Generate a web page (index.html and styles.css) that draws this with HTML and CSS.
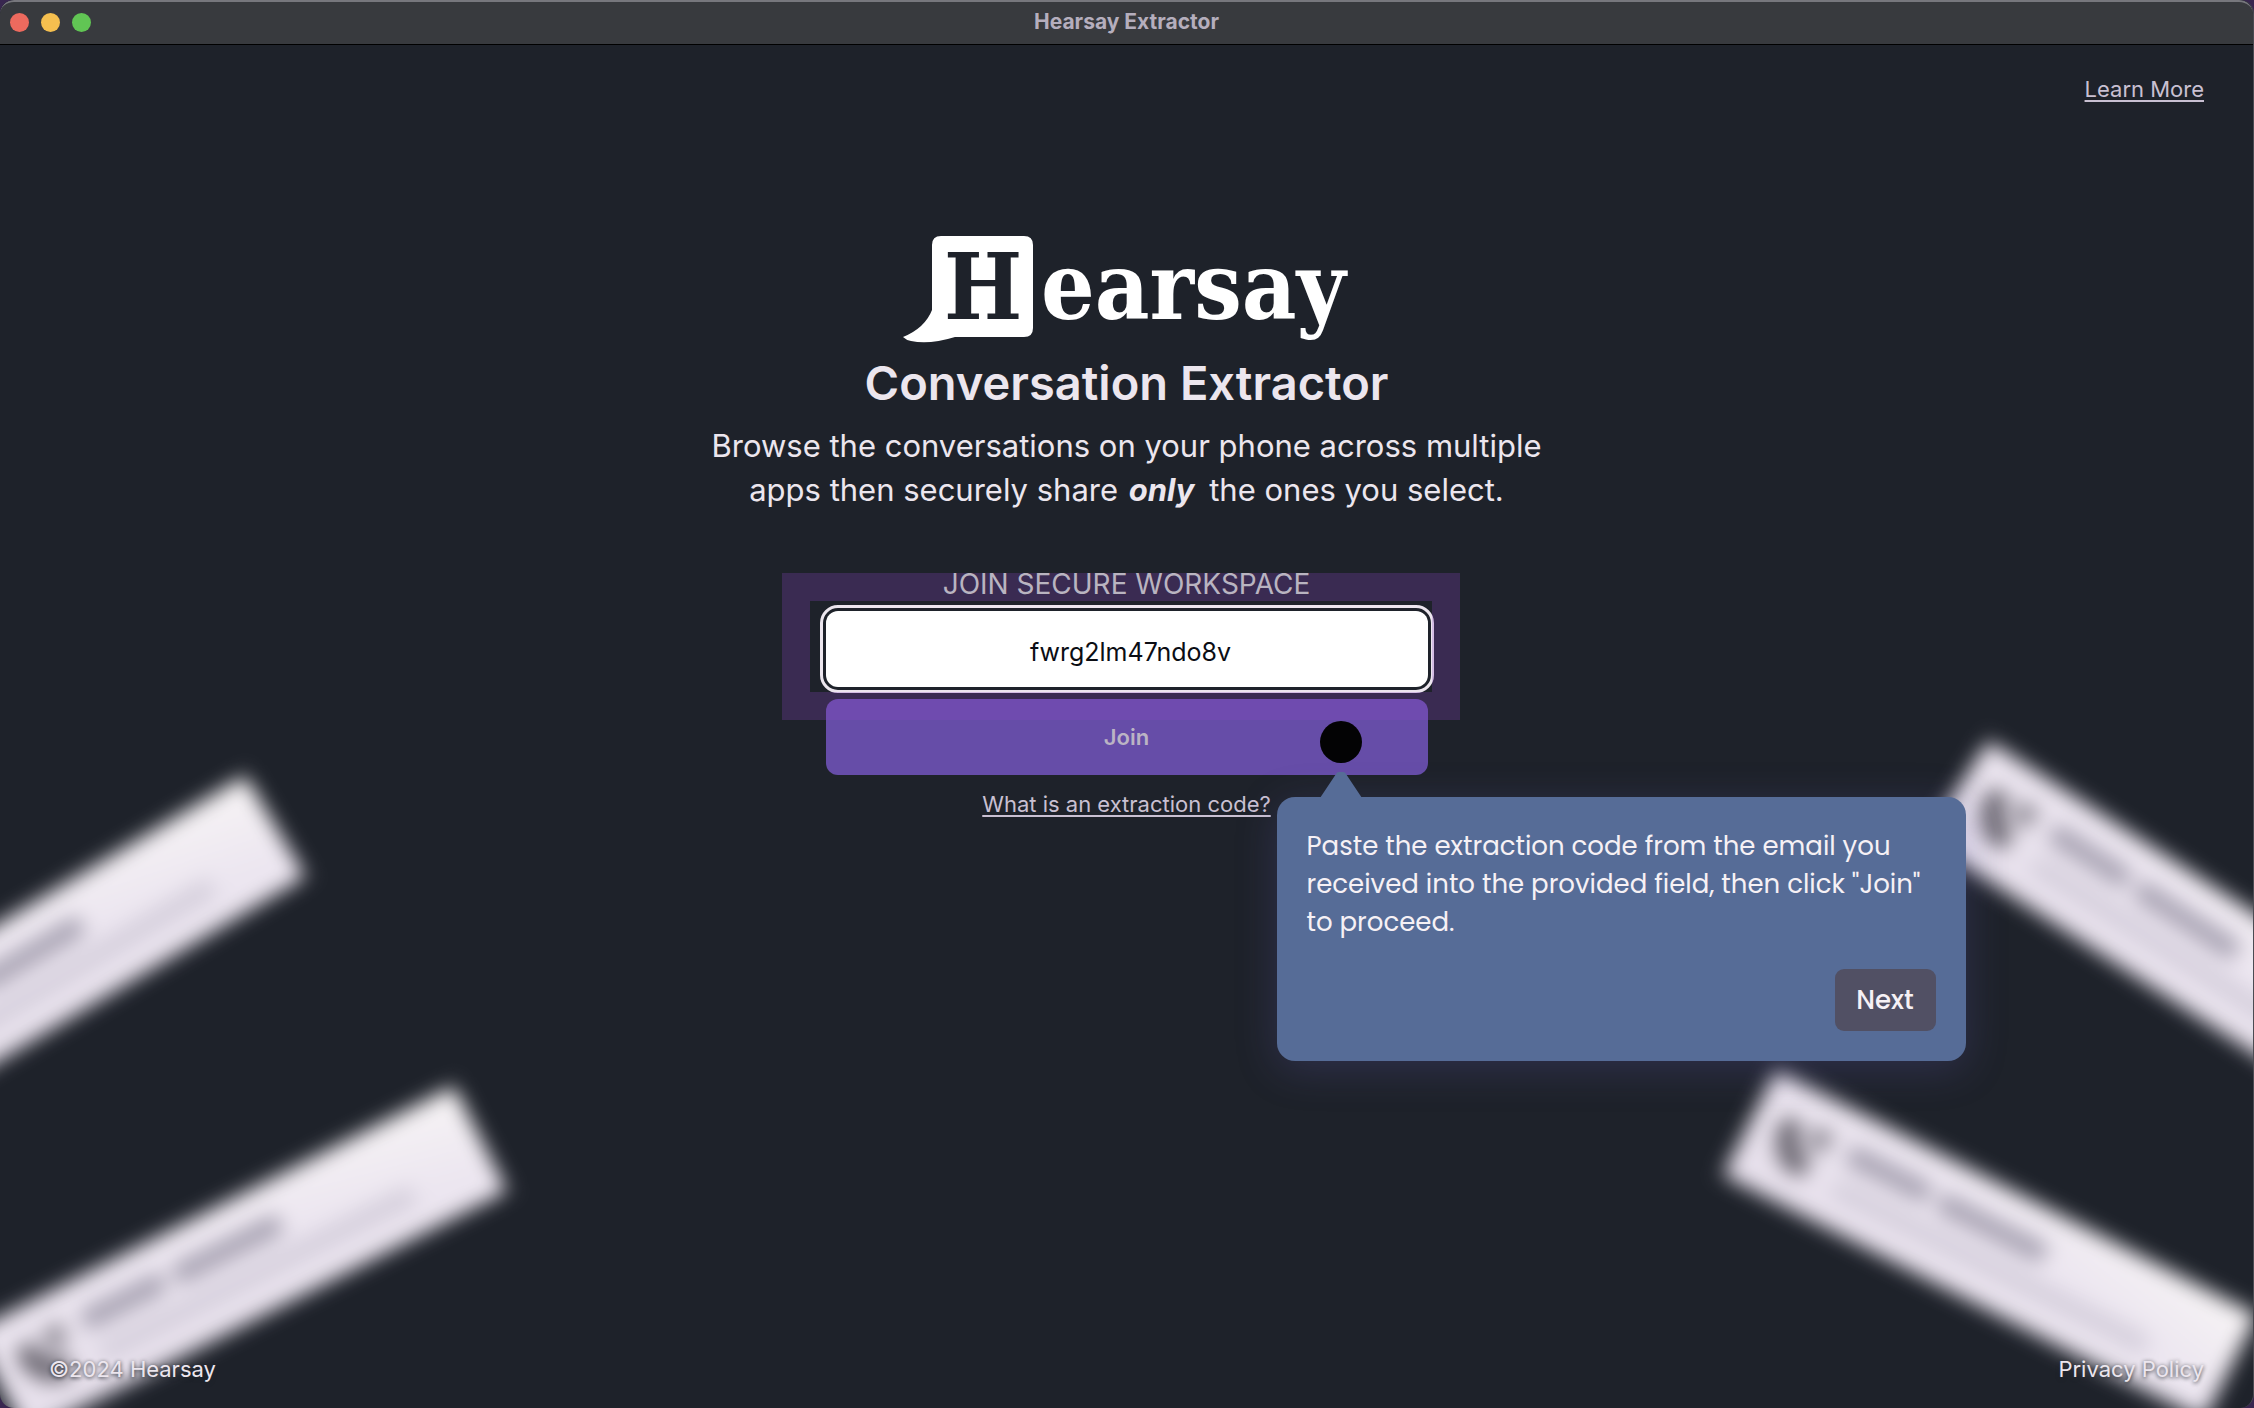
FILE: index.html
```html
<!DOCTYPE html>
<html lang="en">
<head>
    <meta charset="UTF-8">
    <meta name="viewport" content="width=device-width, initial-scale=1.0">
    <title>Hearsay Extractor</title>
    <link rel="stylesheet" href="styles.css">
</head>
<body>
    <div class="window">
        <!-- Blurred conversation cards behind the page -->
        <svg class="defs" aria-hidden="true">
            <defs>
                <linearGradient id="cardFill" x1="0" y1="1" x2="1" y2="0">
                    <stop offset="0" stop-color="#e6dfeb"/>
                    <stop offset="0.6" stop-color="#ece6f0"/>
                    <stop offset="1" stop-color="#f7f4f5"/>
                </linearGradient>
                <symbol id="card" viewBox="0 0 540 118">
                    <rect width="540" height="118" rx="4" fill="url(#cardFill)"/>
                    <path d="M28 42 C26 62 38 84 64 86 L76 76 L68 64 L54 58 L48 38 L38 34 Z" fill="#6d6973"/>
                    <path d="M58 36 L80 30 L82 46 L66 58 Z" fill="#85818b"/>
                    <rect x="102" y="32" width="92" height="20" rx="8" fill="#a5a0b0"/>
                    <rect x="204" y="33" width="120" height="20" rx="8" fill="#a5a0b0"/>
                    <rect x="104" y="68" width="352" height="20" rx="8" fill="#d5cfdc"/>
                </symbol>
            </defs>
        </svg>
        <div class="cards" aria-hidden="true">
            <svg class="card card-left-top"><use href="#card"/></svg>
            <svg class="card card-left-bottom"><use href="#card"/></svg>
            <svg class="card card-right-top"><use href="#card"/></svg>
            <svg class="card card-right-bottom"><use href="#card"/></svg>
        </div>

        <header class="titlebar">
            <div class="lights">
                <span class="light red"></span>
                <span class="light yellow"></span>
                <span class="light green"></span>
            </div>
            <span class="title">Hearsay Extractor</span>
        </header>

        <nav class="topnav">
            <a href="#">Learn More</a>
        </nav>

        <main class="content">
            <svg class="logo" viewBox="0 0 448 108" role="img" aria-label="Hearsay">
                <path d="M38 0 H121 Q130 0 130 9 V92 Q130 101 121 101 H52 Q26 109 8 105 Q3 104 0 101 Q22 92 29 74 V9 Q29 0 38 0 Z" fill="#fff"/>
                <text class="logo-h" x="80" y="83">H</text>
                <text class="logo-text" x="138" y="83">earsay</text>
            </svg>
            <h1>Conversation Extractor</h1>
            <p class="intro">Browse the conversations on your phone across multiple apps then securely share <em>only</em> the ones you select.</p>

            <form class="join">
                <label for="code">JOIN SECURE WORKSPACE</label>
                <input type="text" id="code" class="code" value="fwrg2lm47ndo8v">
                <button type="button" class="join-btn">Join</button>
                <a href="#" class="help">What is an extraction code?</a>

                <!-- Tour step -->
                <div class="spotlight"></div>
                <div class="pointer"></div>
                <div class="tip">
                    <svg class="arrow" viewBox="0 0 42 26" aria-hidden="true"><path d="M0 26 L16 2 Q17 0 19 0 H23 Q25 0 26 2 L42 26 Z" fill="#566c97"/></svg>
                    <p>Paste the extraction code from the email you received into the provided field, then click "Join" to proceed.</p>
                    <button type="button" class="next">Next</button>
                </div>
            </form>
        </main>

        <footer class="footer">
            <span>©2024 Hearsay</span>
            <a href="#">Privacy Policy</a>
        </footer>
    </div>
</body>
</html>
```
FILE: styles.css
```css
* {
    box-sizing: border-box;
}

body {
    margin: 0;
    background-color: #38264f;
    font-family: Inter, sans-serif;
    color: #ece6ee;
}

.window {
    position: relative;
    display: flex;
    flex-direction: column;
    min-height: 100vh;
    overflow: hidden;
    background-color: #1e222a;
    border-right: 1px solid #4a4b52;
    border-radius: 14px;
}

.defs {
    position: absolute;
    width: 0;
    height: 0;
}

/* title bar */
.titlebar {
    position: relative;
    display: flex;
    align-items: center;
    justify-content: center;
    height: 45px;
    padding-bottom: 2px;
    background-color: #383a3e;
    border-top: 2px solid #77777d;
    border-bottom: 1px solid #000;
    border-radius: 14px 14px 0 0;
}

.lights {
    position: absolute;
    left: 10px;
    display: flex;
    gap: 12px;
}

.light {
    width: 19px;
    height: 19px;
    border-radius: 50%;
}

.red {
    background-color: #ed6a5e;
}

.yellow {
    background-color: #f5bf4f;
}

.green {
    background-color: #61c554;
}

.title {
    font-size: 21px;
    font-weight: 700;
    line-height: 24px;
    color: #b5aebd;
}

/* background cards */
.cards {
    position: absolute;
    inset: 0;
    overflow: hidden;
}

.card {
    position: absolute;
    width: 540px;
    height: 118px;
    overflow: visible;
    filter: blur(10px);
}

.card-left-top {
    left: -226px;
    bottom: 384px;
    transform: rotate(-31deg);
}

.card-left-bottom {
    left: -30px;
    bottom: 88px;
    transform: rotate(-27deg);
}

.card-right-top {
    right: -200px;
    bottom: 412px;
    transform: rotate(33deg);
}

.card-right-bottom {
    right: -7px;
    bottom: 104px;
    transform: rotate(27deg);
}

a {
    color: #c9c0d2;
    font-size: 22px;
    line-height: 28px;
    text-underline-offset: 3px;
}

.topnav {
    position: relative;
    display: flex;
    justify-content: flex-end;
    padding: 30px 49px;
}

.content {
    position: relative;
    flex: 1;
    display: flex;
    flex-direction: column;
    align-items: center;
    padding-top: 103px;
}

.logo {
    width: 448px;
    height: 108px;
    overflow: visible;
}

.logo-h,
.logo-text {
    font-family: "DejaVu Serif Condensed", "DejaVu Serif", serif;
    font-weight: 700;
}

.logo-h {
    font-size: 92px;
    text-anchor: middle;
    fill: #1e222a;
}

.logo-text {
    font-size: 94px;
    fill: #fff;
}

h1 {
    margin: 10px 0 0;
    font-size: 47px;
    font-weight: 600;
    line-height: 58px;
}

.intro {
    max-width: 880px;
    margin: 12px 0 0;
    font-size: 31px;
    line-height: 44px;
    text-align: center;
}

.intro em {
    margin: 0 6px 0 2px;
    font-weight: 700;
}

/* join form */
.join {
    position: relative;
    display: flex;
    flex-direction: column;
    width: 602px;
    margin-top: 55px;
}

.join label {
    position: relative;
    z-index: 1;
    font-size: 28px;
    line-height: 34px;
    text-align: center;
    color: #b9b4c0;
}

.code {
    height: 76px;
    margin-top: 10px;
    padding: 6px 0 0 8px;
    border: 0;
    border-radius: 12px;
    outline: 3px solid #ece6ee;
    outline-offset: 3px;
    background-color: #fff;
    color: #0b0d14;
    font: 25px Inter, sans-serif;
    text-align: center;
}

.join-btn {
    height: 76px;
    margin-top: 12px;
    border: 0;
    border-radius: 12px;
    background-color: #664da8;
    color: #bbb4c4;
    font: 600 22px Inter, sans-serif;
}

.help {
    align-self: center;
    margin-top: 15px;
}

/* tour step */
.spotlight {
    position: absolute;
    top: 6px;
    left: -44px;
    width: 678px;
    height: 147px;
    border: 28px solid rgba(138, 68, 196, 0.26);
    pointer-events: none;
}

.pointer {
    position: absolute;
    top: 154px;
    right: 66px;
    width: 42px;
    height: 42px;
    border-radius: 50%;
    background-color: #030304;
}

.tip {
    position: absolute;
    top: 230px;
    left: 451px;
    display: flex;
    flex-direction: column;
    width: 689px;
    padding: 30px;
    border-radius: 18px;
    background-color: #566c97;
    box-shadow: 0 8px 40px rgba(100, 90, 180, 0.25);
}

.arrow {
    position: absolute;
    top: -25px;
    left: 43px;
    width: 42px;
    height: 26px;
}

.tip p {
    margin: 0;
    font-family: Poppins, Lato, sans-serif;
    font-size: 26px;
    line-height: 38px;
    color: #f6f1f5;
}

.next {
    align-self: flex-end;
    width: 101px;
    height: 62px;
    margin-top: 28px;
    border: 0;
    border-radius: 9px;
    background-color: #515064;
    color: #f6f1f5;
    font: 500 26px Poppins, Lato, sans-serif;
}

.footer {
    position: relative;
    display: flex;
    justify-content: space-between;
    padding: 0 49px 25px;
    font-size: 22px;
    line-height: 28px;
    text-shadow: 0 1px 4px #1e222a;
}

.footer a {
    color: #ece6ee;
    text-decoration: none;
}
```
